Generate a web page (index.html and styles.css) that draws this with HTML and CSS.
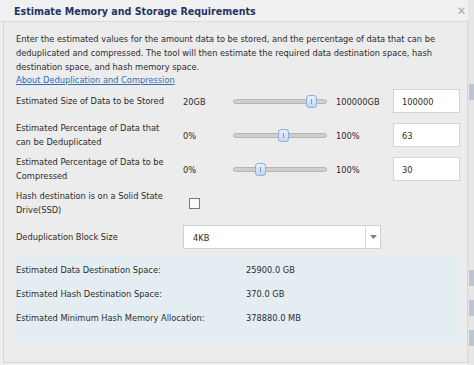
FILE: index.html
```html
<!DOCTYPE html>
<html>
<head>
<meta charset="utf-8">
<link rel="stylesheet" href="styles.css">
</head>
<body>
<div class="page">
  <div class="dialog">
    <div class="header">
      <span class="title">Estimate Memory and Storage Requirements</span>
      <span class="close">&#x2715;</span>
    </div>
    <div class="panel">
      <p class="intro">Enter the estimated values for the amount data to be stored, and the percentage of data that can be deduplicated and compressed. The tool will then estimate the required data destination space, hash destination space, and hash memory space.</p>
      <a class="link" href="#">About Deduplication and Compression</a>
      <div class="form">
        <div class="label">Estimated Size of Data to be Stored</div>
        <div class="min">20GB</div>
        <div class="slider"><div class="track"></div><div class="thumb" style="left:73px"></div></div>
        <div class="max">100000GB</div>
        <div class="input">100000</div>

        <div class="label">Estimated Percentage of Data that can be Deduplicated</div>
        <div class="min">0%</div>
        <div class="slider"><div class="track"></div><div class="thumb" style="left:45px"></div></div>
        <div class="max">100%</div>
        <div class="input">63</div>

        <div class="label">Estimated Percentage of Data to be Compressed</div>
        <div class="min">0%</div>
        <div class="slider"><div class="track"></div><div class="thumb" style="left:22px"></div></div>
        <div class="max">100%</div>
        <div class="input">30</div>

        <div class="label">Hash destination is on a Solid State Drive(SSD)</div>
        <div class="min"><span class="checkbox"></span></div>
        <div class="spacer3"></div>

        <div class="label">Deduplication Block Size</div>
        <div class="select"><span class="sel-val">4KB</span><span class="sel-btn"><svg width="7" height="4" viewBox="0 0 7 4"><path d="M0 0h7L3.5 4z" fill="#808080"/></svg></span></div>
        <div class="spacer1"></div>
      </div>
      <div class="results">
        <div class="rlabel">Estimated Data Destination Space:</div><div class="rval">25900.0 GB</div>
        <div class="rlabel">Estimated Hash Destination Space:</div><div class="rval">370.0 GB</div>
        <div class="rlabel">Estimated Minimum Hash Memory Allocation:</div><div class="rval">378880.0 MB</div>
      </div>
    </div>
  </div>
  <div class="backdrop">
    <span class="mark m1"></span>
    <span class="mark m2"></span>
    <span class="mark m3"></span>
    <span class="mark m4"></span>
  </div>
</div>
</body>
</html>
```
FILE: styles.css
```css
html, body {
  margin: 0;
  padding: 0;
}
body {
  width: 474px;
  height: 365px;
  overflow: hidden;
  background: #e8e8e8;
  font-family: "DejaVu Sans", "Liberation Sans", sans-serif;
  font-stretch: condensed;
  font-size: 9.2px;
  color: #2b2b2b;
}
.page {
  display: flex;
  height: 365px;
}
.dialog {
  width: 468px;
  flex: none;
  display: flex;
  flex-direction: column;
  background: #efefef;
  padding: 0 0 2px 3px;
  box-sizing: border-box;
}
.header {
  flex: none;
  height: 22px;
  box-sizing: border-box;
  margin-left: -3px;
  padding: 0 2px 0 14px;
  display: flex;
  align-items: center;
  justify-content: space-between;
  background: #f1f1f1;
  border-bottom: 1px solid #dcdcdc;
}
.title {
  font-weight: bold;
  font-size: 10.6px;
  color: #1f3565;
}
.close {
  color: #a8a8a8;
  font-size: 12px;
}
.panel {
  flex: 1;
  min-height: 0;
  border-left: 1px solid #d6d6d6;
  border-right: 1px solid #d6d6d6;
  border-bottom: 1px solid #d6d6d6;
  background: #ececec;
  padding: 10px 6px 0 12px;
}
.intro {
  margin: 0;
  line-height: 14px;
}
.link {
  display: inline-block;
  margin-top: -2px;
  color: #2f6db5;
  line-height: 13px;
}
.form {
  display: grid;
  grid-template-columns: 167px 50px 94px 66px 67px;
  grid-auto-rows: 24px;
  row-gap: 10px;
  align-items: center;
  margin-top: 3px;
}
.label {
  line-height: 14px;
  padding-right: 7px;
}
.max {
  padding-left: 9px;
}
.slider {
  position: relative;
  height: 13px;
}
.track {
  position: absolute;
  left: 0;
  right: 0;
  top: 4px;
  height: 3px;
  border: 1px solid #b5b5b5;
  border-radius: 3px;
  background: #cfcfcf;
}
.thumb {
  position: absolute;
  top: 0;
  width: 9px;
  height: 11px;
  border: 1px solid #8fb0d8;
  border-radius: 3px;
  background: linear-gradient(#e6f0fb, #c4d7ef);
}
.thumb::after {
  content: "";
  position: absolute;
  left: 4px;
  top: 3px;
  width: 1px;
  height: 5px;
  background: #7d9cc6;
}
.input {
  height: 24px;
  box-sizing: border-box;
  background: #fff;
  border: 1px solid #d4d4d4;
  padding-left: 8px;
  display: flex;
  align-items: center;
}
.checkbox {
  display: block;
  width: 9px;
  height: 9px;
  margin-left: 6px;
  margin-top: 1px;
  border: 1px solid #777;
  background: #fafafa;
}
.spacer3 {
  grid-column: span 3;
}
.spacer1 {
  grid-column: span 1;
}
.select {
  grid-column: 2 / span 3;
  width: 198px;
  height: 24px;
  box-sizing: border-box;
  border: 1px solid #d0d0d0;
  background: #fff;
  display: flex;
}
.sel-val {
  flex: 1;
  padding-left: 9px;
  display: flex;
  align-items: center;
}
.sel-btn {
  width: 14px;
  border-left: 1px solid #d8d8d8;
  display: flex;
  align-items: center;
  justify-content: center;
}
.results {
  margin-top: 7px;
  width: 445px;
  background: #e4eef2;
  display: grid;
  grid-template-columns: 230px 1fr;
  grid-auto-rows: 24px;
  align-items: center;
  padding: 1px 0 13px 1px;
  margin-left: -1px;
  box-sizing: border-box;
}
.backdrop {
  flex: 1;
  display: flex;
  flex-direction: column;
  background: #e6e6e6;
  padding-top: 84px;
}
.mark {
  display: block;
  height: 16px;
  margin-left: 1px;
  background: #bcc6d3;
}
.m2 { margin-top: 170px; }
.m3 { margin-top: 14px; }
.m4 { margin-top: 14px; }
```
